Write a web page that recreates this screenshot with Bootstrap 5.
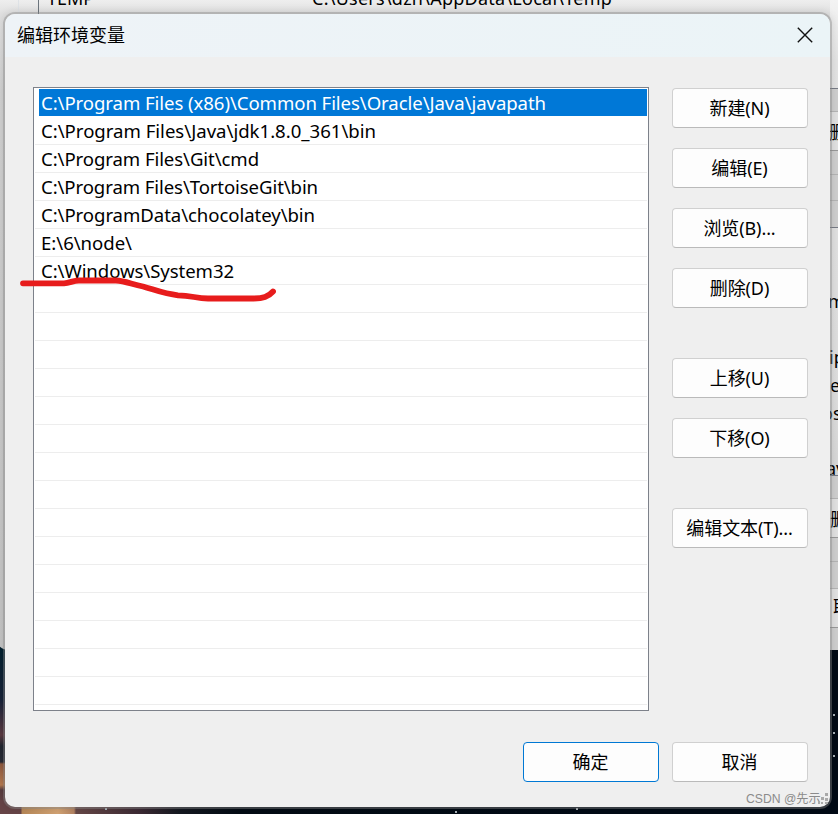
<!DOCTYPE html>
<html lang="zh-CN">
<head>
<meta charset="utf-8">
<meta name="viewport" content="width=device-width, initial-scale=1">
<title>编辑环境变量</title>
<link href="https://cdn.jsdelivr.net/npm/bootstrap@5.3.0/dist/css/bootstrap.min.css" rel="stylesheet">
<style>
body{font-family:"Noto Sans","Noto Sans CJK SC",sans-serif;font-size:18px;line-height:28px;color:#000}
.desktop{width:838px;height:814px;background:#010a15}
.parent-win{left:-5px;top:0;width:855px;height:650px;border-radius:0 0 10px 14px;background:linear-gradient(#eee 0,#e0e0e0 14px,#d2d2d2 90px,#c5c5c5 100%)}
.parent-win .tail{left:835px;top:0;width:20px;height:650px;background:linear-gradient(#f3f3f3,#e4e4e4 60px,#dedede 400px,#c8c8c8)}
.back-label{white-space:pre;line-height:20px}
.strip{left:835px;width:20px;background:#cfcfcf;border-top:1px solid #777b85}
.strip div{border-bottom:1px solid #b5b5b5}
.strip .key{background:#e2e2e2;border-bottom-color:#999}
.sunset{left:0;top:640px;width:40px;height:174px;background:linear-gradient(#00202e,#172238 60px,#5b3a41 95px,#222630 106px,#282a35 122px,#8f593f 124px,#b67a50 145px,#583c3f 150px,#70494b)}
.horizon{left:0;top:800px;width:838px;height:14px;background:linear-gradient(90deg,#674547 0 21px,#b88959 22px,#d3a373 58px,#b48463 74px,#674847 76px,#3c2a34 140px,#141820 180px,#030b14 240px,#010a15 600px)}
.star{width:2px;height:2px;background:#a9b1b7}
.dialog{left:3px;top:12px;width:829px;height:797px;padding:2px;border-radius:12px;background:rgba(125,125,125,.45);box-shadow:0 0 8px rgba(0,0,0,.12)}
.dialog-in{border-radius:10px;background:#efefef}
.title-bar{height:43px;background:linear-gradient(90deg,#eef3f7,#ebf4f7);padding:0 17px 2px 12px;font-size:18px}
.main-area{padding:30px 22px 0 28px;height:654px}
.path-list{width:616px;height:624px;background:#fff;border:1px solid #7d818a;padding:1px 1px 0 1px}
.path-list li{height:28px;padding-left:6px;border-bottom:1px solid #ededed;white-space:pre;font-size:18.6px;line-height:28px}
.path-list li.selected{background:linear-gradient(90deg,#fff 4px,#0078d7 4px);color:#fff;border-bottom:0;height:27px;margin-bottom:1px}
.commands{width:136px;gap:20px;padding-top:1px}
.win-btn{--bs-btn-padding-x:0;--bs-btn-padding-y:0;--bs-btn-border-radius:4px;--bs-btn-color:#000;--bs-btn-bg:#fdfdfd;--bs-btn-border-color:#d0d0d0;border-bottom-color:#bababa;width:136px;height:40px;font-size:18px;letter-spacing:-.1px;padding-right:1px}
.win-btn.primary{border-color:#0078d4}
.group-gap{margin-top:30px}
.footer-row{padding:31px 22px 0;gap:13px}
.scribble{left:0;top:260px}
.watermark{left:746px;top:790px;font:12.2px/18px "Liberation Sans","Noto Sans CJK SC",sans-serif;color:#8b8b8b;white-space:pre}
.pixels{left:817px;top:793px}
</style>
<script src="https://cdn.jsdelivr.net/npm/bootstrap@5.3.0/dist/js/bootstrap.bundle.min.js"></script>
</head>
<body class="m-0 overflow-hidden">
<div class="desktop position-relative overflow-hidden">
  <div class="sunset position-absolute"></div>
  <div class="horizon position-absolute"></div>
  <i class="star position-absolute" style="left:105px;top:808px"></i>
  <i class="star position-absolute" style="left:455px;top:811px"></i>
  <i class="star position-absolute" style="left:576px;top:808px"></i>
  <i class="star position-absolute" style="left:833px;top:732px"></i>
  <i class="star position-absolute" style="left:833px;top:755px"></i>
  <i class="star position-absolute" style="left:833px;top:714px"></i>

  <div class="parent-win position-absolute overflow-hidden">
    <div class="tail position-absolute"></div>
    <span class="back-label position-absolute" style="left:52px;top:-12px">TEMP</span>
    <span class="back-label position-absolute" style="left:317px;top:-12px;letter-spacing:.25px">C:\Users\dzh\AppData\Local\Temp</span>
    <span class="position-absolute border-start border-secondary" style="left:43px;top:0;height:14px"></span>
    <span class="position-absolute border-start" style="left:23px;top:0;height:14px"></span>
    <div class="strip position-absolute" style="top:88px;height:140px;border-bottom:1px solid #777b85">
      <div style="height:23px"></div><div class="key" style="height:39px"></div><div style="height:24px"></div><div style="height:26px"></div>
    </div>
    <div class="strip position-absolute" style="top:475px;height:175px">
      <div style="height:23px"></div><div class="key" style="height:39px"></div><div style="height:24px"></div><div style="height:27px"></div><div class="key" style="height:39px"></div>
    </div>
    <span class="back-label position-absolute" style="left:834px;top:122px">删</span>
    <span class="back-label position-absolute" style="left:833px;top:291px">m</span>
    <span class="back-label position-absolute" style="left:834px;top:347px">ip</span>
    <span class="back-label position-absolute" style="left:835px;top:375px">e</span>
    <span class="back-label position-absolute" style="left:827px;top:403px">os</span>
    <span class="back-label position-absolute" style="left:831px;top:458px">av</span>
    <span class="back-label position-absolute" style="left:835px;top:509px">删</span>
    <span class="back-label position-absolute" style="left:838px;top:597px">取</span>
  </div>

  <section class="dialog position-absolute">
    <div class="dialog-in h-100 overflow-hidden">
      <header class="title-bar d-flex align-items-center justify-content-between">
        <span>编辑环境变量</span>
        <svg width="16" height="16" viewBox="0 0 16 16" fill="none" stroke="#111" stroke-width="1.4"><path d="M.8.8 15.2 15.2M15.2.8.8 15.2"/></svg>
      </header>
      <main class="main-area d-flex justify-content-between">
        <ul class="path-list list-unstyled mb-0 overflow-hidden">
          <li class="selected"><span data-w="504">C:\Program Files (x86)\Common Files\Oracle\Java\javapath</span></li>
          <li><span data-w="334">C:\Program Files\Java\jdk1.8.0_361\bin</span></li>
          <li><span data-w="217">C:\Program Files\Git\cmd</span></li>
          <li><span data-w="276">C:\Program Files\TortoiseGit\bin</span></li>
          <li><span data-w="273">C:\ProgramData\chocolatey\bin</span></li>
          <li><span data-w="90">E:\6\node\</span></li>
          <li><span data-w="192">C:\Windows\System32</span></li>
          <li></li><li></li><li></li><li></li><li></li><li></li><li></li><li></li><li></li><li></li><li></li><li></li><li></li><li></li><li></li>
        </ul>
        <div class="commands d-flex flex-column">
          <button class="btn win-btn">新建(N)</button>
          <button class="btn win-btn">编辑(E)</button>
          <button class="btn win-btn">浏览(B)...</button>
          <button class="btn win-btn">删除(D)</button>
          <button class="btn win-btn group-gap">上移(U)</button>
          <button class="btn win-btn">下移(O)</button>
          <button class="btn win-btn group-gap">编辑文本(T)...</button>
        </div>
      </main>
      <footer class="footer-row d-flex justify-content-end">
        <button class="btn win-btn primary">确定</button>
        <button class="btn win-btn">取消</button>
      </footer>
    </div>
  </section>
  <svg class="scribble position-absolute" width="300" height="50" viewBox="0 260 300 50" fill="none" stroke="#e71c1c" stroke-width="5.8" stroke-linecap="round" stroke-linejoin="round"><path d="M23 283.3H64C70 283 73 280.5 79 280.5H116C125 281 131 284 143 286.5C154 289.500 164 294 178 295.300C192 295.500 196 298.500 208 298.500H254C263 298.500 268 297 273 291.500"/></svg>
  <span class="watermark position-absolute">CSDN @先示</span>
  <svg class="pixels position-absolute" width="14" height="13" fill="#a9a9a9"><path d="M8 0h3v3H8zM4 4h3v3H4zM8 5h3v3H8zM1 8h2v3H1zM4 9h2v2H4zM8 9h3v2H8z"/></svg>
</div>
<script>
document.querySelectorAll('[data-w]').forEach(function (s) {
  var n = s.textContent.length, w = s.getBoundingClientRect().width;
  s.style.letterSpacing = ((+s.dataset.w + 1 - w) / n) + 'px';
});
</script>
</body>
</html>
